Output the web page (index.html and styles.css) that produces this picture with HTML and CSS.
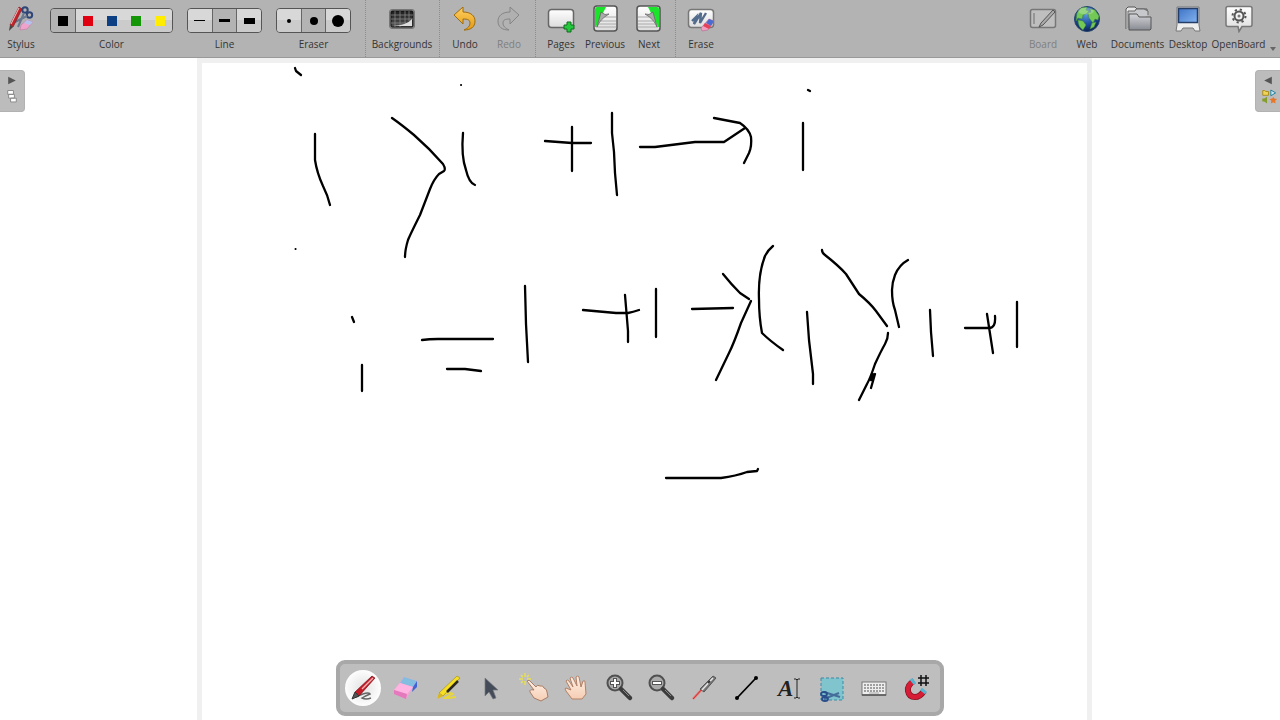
FILE: index.html
```html
<!DOCTYPE html>
<html lang="en">
<head>
<meta charset="utf-8">
<title>OpenBoard</title>
<link rel="stylesheet" href="styles.css">
</head>
<body>
<svg class="defs" aria-hidden="true">
  <defs>
    <linearGradient id="paper" x1="0" y1="0" x2="0" y2="1"><stop offset="0" stop-color="#fff"/><stop offset="1" stop-color="#dcdcdc"/></linearGradient>
    <linearGradient id="gold" x1="0" y1="0" x2="0" y2="1"><stop offset="0" stop-color="#ffd062"/><stop offset="1" stop-color="#e39a12"/></linearGradient>
    <linearGradient id="folder" x1="0" y1="0" x2="0" y2="1"><stop offset="0" stop-color="#d4d5d9"/><stop offset="1" stop-color="#888b92"/></linearGradient>
    <linearGradient id="screen" x1="0" y1="0" x2="1" y2="1"><stop offset="0" stop-color="#3f74c6"/><stop offset="1" stop-color="#82b2ef"/></linearGradient>
    <radialGradient id="ocean" cx=".45" cy=".3" r=".7"><stop offset="0" stop-color="#5c9ae0"/><stop offset=".6" stop-color="#1d4d9c"/><stop offset="1" stop-color="#0b2250"/></radialGradient>
    <linearGradient id="skin" x1="0" y1="0" x2="0" y2="1"><stop offset="0" stop-color="#fff0e4"/><stop offset="1" stop-color="#f5cdb4"/></linearGradient>
    <linearGradient id="chalk" x1="0" y1="0" x2="0" y2="1"><stop offset="0" stop-color="#1c1c1c"/><stop offset="1" stop-color="#555"/></linearGradient>
  </defs>
</svg>

<header class="toolbar">
  <button class="tool tool-side" type="button">
    <svg class="icon" viewBox="0 0 28 28"><g fill="none" stroke="#2f4678" stroke-width="2"><circle cx="18" cy="5" r="2.7"/><circle cx="22.5" cy="10" r="2.7"/></g><path d="M17 8l-6 14M20 11L8 17" stroke="#6a7890" stroke-width="2"/><path d="M12 2l3 2L6 22l-3-2z" fill="#c4232a" stroke="#801c20" stroke-width=".7"/><path d="M12 3L4 19" stroke="#eecaca" stroke-width="1"/><path d="M3 20l3 2-4 4z" fill="#444"/><path d="M14 20l6-5 6 2-6 7-7 1z" fill="#efa2cb" stroke="#c07aa3" stroke-width=".6"/><path d="M20 15l6 2-3 3-6-2z" fill="#b3c3ed"/></svg>
    <span>Stylus</span>
  </button>

  <div class="choice choice-color" role="group" aria-labelledby="lbl-color">
    <div class="segments">
      <button class="segment on" type="button" aria-label="Black" aria-pressed="true"><i class="swatch black"></i></button>
      <button class="segment" type="button" aria-label="Red"><i class="swatch red"></i></button>
      <button class="segment" type="button" aria-label="Blue"><i class="swatch blue"></i></button>
      <button class="segment" type="button" aria-label="Green"><i class="swatch green"></i></button>
      <button class="segment" type="button" aria-label="Yellow"><i class="swatch yellow"></i></button>
    </div>
    <span id="lbl-color">Color</span>
  </div>
  <div class="choice" role="group" aria-labelledby="lbl-line">
    <div class="segments divided">
      <button class="segment" type="button" aria-label="Thin line"><i class="stroke thin"></i></button>
      <button class="segment on" type="button" aria-label="Medium line" aria-pressed="true"><i class="stroke medium"></i></button>
      <button class="segment" type="button" aria-label="Thick line"><i class="stroke thick"></i></button>
    </div>
    <span id="lbl-line">Line</span>
  </div>
  <div class="choice" role="group" aria-labelledby="lbl-eraser">
    <div class="segments divided">
      <button class="segment" type="button" aria-label="Small eraser"><i class="dot small"></i></button>
      <button class="segment on" type="button" aria-label="Medium eraser" aria-pressed="true"><i class="dot mid"></i></button>
      <button class="segment" type="button" aria-label="Large eraser"><i class="dot large"></i></button>
    </div>
    <span id="lbl-eraser">Eraser</span>
  </div>

  <div class="section">
    <button class="tool tool-wide" type="button">
      <svg class="icon" viewBox="0 0 28 28"><rect x="1.500" y="4.500" width="25" height="19" rx="2.500" fill="#999" stroke="#777"/><rect x="3" y="6" width="22" height="16" rx="1" fill="url(#chalk)" stroke="#111"/><path d="M3 10h22M3 14h22M3 18h15M7 6v16M12 6v16M17 6v12M21 6v10" stroke="#858585" stroke-width=".8"/><path d="M5 21q14-1 19-7v7z" fill="#ddd"/></svg>
      <span>Backgrounds</span>
    </button>
  </div>
  <div class="section">
    <button class="tool" type="button">
      <svg class="icon" viewBox="0 0 28 28"><path d="M3 10l9-8v5c8 0 12 4 12 9 0 6-4 9-11 9 4-2 6-4 6-7s-2-4-7-4v5z" fill="url(#gold)" stroke="#9c6c13"/></svg>
      <span>Undo</span>
    </button>
    <button class="tool" type="button" disabled>
      <svg class="icon" viewBox="0 0 28 28"><path d="M24 10l-9-8v5C7 7 3 11 3 16c0 6 4 9 11 9-4-2-6-4-6-7s2-4 7-4v5z" fill="#b0b0b0" stroke="#858585"/></svg>
      <span>Redo</span>
    </button>
  </div>
  <div class="section">
    <button class="tool" type="button">
      <svg class="icon" viewBox="0 0 28 28"><rect x="1.500" y="4.500" width="25" height="18" rx="3" fill="url(#paper)" stroke="#666" stroke-width="1.500"/><path d="M20 17h4v3h3v4h-3v3h-4v-3h-3v-4h3z" fill="#24c83c" stroke="#126a1c"/></svg>
      <span>Pages</span>
    </button>
    <button class="tool" type="button">
      <svg class="icon" viewBox="0 0 28 28"><rect x="3" y="1" width="23" height="25" rx="3" fill="url(#paper)" stroke="#555" stroke-width="1.500"/><path d="M12 12h13M10 16h15M8 19h17M5 22h20" stroke="#aaa"/><path d="M4 4q0-2 2-2h9L5 22H4z" fill="#1be52a"/><path d="M10 7q4 4 8 2Q9 14 6 22z" fill="#aaa" stroke="#666" stroke-width=".8"/></svg>
      <span>Previous</span>
    </button>
    <button class="tool" type="button">
      <svg class="icon" viewBox="0 0 28 28"><rect x="2" y="1" width="23" height="25" rx="3" fill="url(#paper)" stroke="#555" stroke-width="1.500"/><path d="M3 12h13M3 16h15M3 19h17M3 22h20" stroke="#aaa"/><path d="M24 4q0-2-2-2h-9l10 20h1z" fill="#1be52a"/><path d="M18 7q-4 4-8 2 9 5 12 13z" fill="#aaa" stroke="#666" stroke-width=".8"/></svg>
      <span>Next</span>
    </button>
  </div>
  <div class="section">
    <button class="tool" type="button">
      <svg class="icon" viewBox="0 0 28 28"><rect x="1.500" y="4.500" width="25" height="18" rx="3" fill="url(#paper)" stroke="#777" stroke-width="1.500"/><path d="M5 16l4-4-2 7 7-11-1 10 6-10" fill="none" stroke="#536b8d" stroke-width="2.400"/><path d="M14 23l8-9 5 2-6 9-6 1z" fill="#f1a0c3" stroke="#b16a90" stroke-width=".6"/><path d="M22 14l5 2-3 5-5-3z" fill="#4a6cd0"/><path d="M18 18l6 3-2 3-6-3z" fill="#e6415b"/></svg>
      <span>Erase</span>
    </button>
  </div>

  <nav class="modes">
    <button class="tool" type="button" disabled>
      <svg class="icon" viewBox="0 0 28 28"><rect x="1.500" y="4.500" width="25" height="18" rx="2" fill="#bfbfbf" stroke="#777" stroke-width="1.500"/><path d="M5 8v11" stroke="#888" stroke-width="1.500"/><path d="M24 5l2 2-12 13-4 2 2-4z" fill="#aaa" stroke="#555"/></svg>
      <span>Board</span>
    </button>
    <button class="tool" type="button">
      <svg class="icon" viewBox="0 0 28 28"><circle cx="14" cy="14" r="12.500" fill="url(#ocean)" stroke="#24446f"/><path d="M4 8l4-5 6-1-1 3 3 1-3 3-3 1-1 4-4-1-2 3zM5 15l5 1 3 4-3 5q-5-3-5-10zM17 4l5 1 4 6-1 4-3-1-2 4-4-5-1-5 3-1zM19 18l4-1-2 5-4 2z" fill="#74c956" stroke="#418734" stroke-width=".5"/><ellipse cx="13" cy="6" rx="8" ry="3.500" fill="#fff" opacity=".25"/></svg>
      <span>Web</span>
    </button>
    <button class="tool tool-mid" type="button">
      <svg class="icon" viewBox="0 0 28 28"><path d="M2 24V4l2-2h7l2 2h10v4" fill="#e7e7e7" stroke="#555"/><path d="M4 23V6h7l1-2h8l4 2v4" fill="#c7c8cb" stroke="#666"/><path d="M5 25V9h8l2 3h12v12l-1 1z" fill="url(#folder)" stroke="#555"/></svg>
      <span>Documents</span>
    </button>
    <button class="tool" type="button">
      <svg class="icon" viewBox="0 0 28 28"><path d="M3 2h22v18l1 6h-5l-2-3H9l-2 3H2l1-6z" fill="#eee" stroke="#777"/><rect x="4.500" y="3.500" width="19" height="14" fill="url(#screen)" stroke="#243e67" stroke-width="1.500"/></svg>
      <span>Desktop</span>
    </button>
    <button class="tool tool-mid" type="button">
      <svg class="icon" viewBox="0 0 28 28"><path d="M3 1.500h22q2 0 2 2v16q0 2-2 2h-8l-3 5-1-5H3q-2 0-2-2v-16q0-2 2-2z" fill="url(#paper)" stroke="#777" stroke-width="1.500"/><g fill="none" stroke="#555"><circle cx="14" cy="11" r="4.500" stroke-width="2"/><circle cx="14" cy="11" r="6.500" stroke-width="2" stroke-dasharray="2.200 2.900"/></g><circle cx="14" cy="11" r="1.500" fill="#777"/></svg>
      <span>OpenBoard</span>
    </button>
    <button class="more" type="button" aria-label="More"></button>
  </nav>
</header>

<main class="workspace">
  <section class="page" aria-label="Board page">
    <svg class="ink" viewBox="202 63 885 657">
      <path d="M295 68l1 3 5 4"/>
      <path d="M461 85h.1M295.500 249h.1" class="point"/>
      <path d="M808 90l2 1"/>
      <path d="M315 134v26q2 13 8 26 5 10 7 19"/>
      <path d="M392 118q10 7 22 17 15 13 29 29 3 5 1 7l-5 3q-5 5-9 15l-10 26q-10 20-12 25-3 10-3 17"/>
      <path d="M463 133q-2 23 3 37 3 13 9 15"/>
      <path d="M545 141l27 2h19M572 127v44"/>
      <path d="M612 113v20l2 19 1 21 2 22"/>
      <path d="M640 147h15l40-5h29l21-14"/>
      <path d="M714 118l26 5q9 6 11 14 1 9-2 16l-5 10"/>
      <path d="M803 123v47"/>
      <path d="M352 317l2 5M362 365v26"/>
      <path d="M422 340q7-1 16-1h55M447 369h18l16 2"/>
      <path d="M525 286l1 38 2 38"/>
      <path d="M583 310l33 3h12q5-1 11-3M625 295l3 36v11M656 289v48"/>
      <path d="M692 309l41-1M723 274q8 10 17 19l9 6M751 301q-5 11-10 22-7 20-12 30l-13 27"/>
      <path d="M773 246q-5 4-8 10-7 18-6 43 0 18 3 34 8 8 21 17"/>
      <path d="M807 312l2 28 4 34v10"/>
      <path d="M822 250q0 3 3 5 14 11 21 19l13 20q11 9 17 17l11 15M888 333q0 6-3 11-4 7-10 20-5 15-8 20l-8 16M871 388l4-14-4 6 2-6"/>
      <path d="M908 260q-9 5-13 15-3 8-3 15 0 12 3 20l4 17"/>
      <path d="M930 310l1 22 2 24M965 328h24q7 0 6-12M987 314l4 26 2 13M1017 302v45"/>
      <path d="M666 478h55q15-2 26-6l10-1 1-2"/>
    </svg>
  </section>

  <button class="drawer drawer-left" type="button" aria-label="Show pages">
    <svg viewBox="0 0 24 42"><path d="M8 6v8l8-4z" fill="#555"/><g fill="#fff" stroke="#888"><path d="M7.500 20.500h6v4h-6zM8.500 24.500h6v4h-6zM10.500 28.500h6v4h-6z"/></g></svg>
  </button>
  <button class="drawer drawer-right" type="button" aria-label="Show library">
    <svg viewBox="0 0 24 42"><path d="M16 6v8l-8-4z" fill="#555"/><path d="M6.500 20.500h2l1 1h3v4h-6z" fill="#efd455" stroke="#aa8a1b"/><path d="M15 20l5 3-5 3z" fill="#cce7f1" stroke="#187c9d"/><path d="M6 29h2l3-2v7l-3-2H6z" fill="#849e2c"/><path d="M17.500 27l1 2 3 .3-2 2 .5 2.700-2.500-1.300L15 34l.5-2.700-2-2 3-.3z" fill="#e87628"/></svg>
  </button>
</main>

<div class="palette" role="toolbar" aria-label="Drawing tools">
  <button class="pick on" type="button" aria-label="Pen"><svg viewBox="0 0 32 32"><path d="M9 25q12-6 14-3-5 2-8 4 4 2 9 0" fill="none" stroke="#666" stroke-width="1.500"/><path d="M25 4l3 2L12 24l-4-4z" fill="#c41b29" stroke="#721019" stroke-width=".7"/><path d="M26 6L15 17" stroke="#f7b4b4" stroke-width="1.500"/><path d="M8 20l4 4-7 3z" fill="#555" stroke="#333"/></svg></button>
  <button class="pick" type="button" aria-label="Eraser"><svg viewBox="0 0 32 32"><path d="M14 5l13 4-11 18-12-5V18z" fill="#f3a4d5"/><path d="M14 5l13 4-4 6-13-4z" fill="#83bde0"/><path d="M10 11l13 4-6 7-13-4z" fill="#ffb4e1"/><path d="M27 9v6l-5 5 1-5z" fill="#4164d4"/><path d="M4 18l13 4-1 5-12-5z" fill="#e479bd"/></svg></button>
  <button class="pick" type="button" aria-label="Highlighter"><svg viewBox="0 0 32 32"><path d="M5 26q13-7 16-4-5 2-8 4 5 0 11-1" fill="none" stroke="#e9d638" stroke-width="1.800"/><path d="M25 4l3 2-17 18-4-3z" fill="#f7df24" stroke="#a6921a" stroke-width=".7"/><path d="M26 9L15 20" stroke="#292720" stroke-width="2.500"/><path d="M7 21l4 3-6 3z" fill="#d9b51e"/></svg></button>
  <button class="pick" type="button" aria-label="Select"><svg viewBox="0 0 32 32"><path d="M10 6v18l4-4 4 7 3-1-3-8h5z" fill="#444b59" stroke="#777b83" stroke-width=".7"/></svg></button>
  <button class="pick" type="button" aria-label="Interact"><svg viewBox="0 0 32 32"><path d="M7 1v4M7 9v4M1 7h4M9 7h4M3 3l2 2M9 9l2 2M11 3L9 5M5 9l-2 2" stroke="#e9e052" stroke-width="1.500"/><path d="M9 9q2-2 4 1l5 5q1-3 4-1 3-1 4 2 3 1 3 4l1 5-7 4-7-3-4-6q-1-3 4-2z" fill="url(#skin)" stroke="#a77c66"/></svg></button>
  <button class="pick" type="button" aria-label="Hand"><svg viewBox="0 0 32 32"><path d="M12 27l-6-8q-2-3 0-3l5 2L6 9q1-2 3 0l4 6-3-9q2-2 3 0l4 8-1-9q2-2 3 0l2 10 2-6q2-1 2 1l1 12-4 5z" fill="url(#skin)" stroke="#b38168"/></svg></button>
  <button class="pick" type="button" aria-label="Zoom in"><svg viewBox="0 0 32 32"><circle cx="12" cy="11" r="7.500" fill="#aaa" stroke="#505050" stroke-width="2"/><path d="M12 6v10M7 11h10" stroke="#555" stroke-width="4"/><path d="M12 7v8M8 11h8" stroke="#fff" stroke-width="2"/><path d="M18 17l9 9" stroke="#3c3c3c" stroke-width="4.500" stroke-linecap="round"/><path d="M20 18l6 6" stroke="#888"/></svg></button>
  <button class="pick" type="button" aria-label="Zoom out"><svg viewBox="0 0 32 32"><circle cx="12" cy="11" r="7.500" fill="#aaa" stroke="#505050" stroke-width="2"/><path d="M7 11h10" stroke="#555" stroke-width="4"/><path d="M8 11h8" stroke="#fff" stroke-width="2"/><path d="M18 17l9 9" stroke="#3c3c3c" stroke-width="4.500" stroke-linecap="round"/><path d="M20 18l6 6" stroke="#888"/></svg></button>
  <button class="pick" type="button" aria-label="Laser pointer"><svg viewBox="0 0 32 32"><path d="M5 27l10-11" stroke="#e57a75" stroke-width="2.500"/><path d="M5 27l10-11" stroke="#d52a2a"/><path d="M25 4l3 2-12 14-4-3z" fill="#777" stroke="#555"/><path d="M25 6L14 18" stroke="#e5e5e5" stroke-width="1.500"/><path d="M20 11l2-2" stroke="#333" stroke-width="2"/></svg></button>
  <button class="pick" type="button" aria-label="Line"><svg viewBox="0 0 32 32"><path d="M7 26L26 6" stroke="#000" stroke-width="1.800"/><circle cx="7" cy="26" r="2"/><circle cx="26" cy="6" r="2"/></svg></button>
  <button class="pick" type="button" aria-label="Text"><svg viewBox="0 0 32 32"><text class="letter" x="5" y="24">A</text><path d="M21 7h2l1 1 1-1h2M21 26h2l1-1 1 1h2M24 8v17" fill="none" stroke="#222"/></svg></button>
  <button class="pick" type="button" aria-label="Capture"><svg viewBox="0 0 32 32"><path d="M5 6h22v22H5z" fill="#80c5cd" stroke="#3d89a6" stroke-dasharray="3 2"/><path d="M8 20l16 5M8 27l15-6" stroke="#456d9b" stroke-width="2"/><g fill="none" stroke="#294e8b" stroke-width="1.800"><ellipse cx="8" cy="22" rx="3" ry="2"/><ellipse cx="9" cy="27" rx="3" ry="2"/></g></svg></button>
  <button class="pick" type="button" aria-label="Keyboard"><svg viewBox="0 0 32 32"><rect x="4" y="10" width="24" height="13" fill="#eee" stroke="#777"/><path d="M6 13h20M6 16h20M6 19h20" stroke="#858585" stroke-width="1.500" stroke-dasharray="2 1"/><path d="M11 21h10" stroke="#aaa"/><path d="M4 23h24" stroke="#555" stroke-width="1.500"/></svg></button>
  <button class="pick" type="button" aria-label="Snap to grid"><svg viewBox="0 0 32 32"><path d="M13 9q-7 4-6 10 1 6 7 6 5 0 9-6" fill="none" stroke="#891321" stroke-width="6"/><path d="M13 9q-7 4-6 10 1 6 7 6 5 0 9-6" fill="none" stroke="#d71d36" stroke-width="4.500"/><path d="M10 7l4 5M20 17l5 4" stroke="#57b4d2" stroke-width="3"/><path d="M20 3v11M25 3v11M17 6h11M17 11h11" stroke="#111" stroke-width="1.500"/></svg></button>
</div>
</body>
</html>
```

FILE: styles.css
```css
* {
  box-sizing: border-box;
}

body {
  margin: 0;
  min-height: 100vh;
  display: flex;
  flex-direction: column;
  background: #fff;
  color: #333;
  font: 10px/14px "Open Sans", "Noto Sans", sans-serif;
}

button {
  margin: 0;
  padding: 0;
  border: 0;
  background: none;
  color: inherit;
  font: inherit;
}

.defs {
  position: absolute;
  width: 0;
  height: 0;
}

.toolbar {
  display: flex;
  min-height: 58px;
  background: #b3b3b3;
  border-bottom: 1px solid #999;
}

.tool {
  display: flex;
  flex-direction: column;
  align-items: center;
  gap: 4px;
  width: 44px;
  padding-top: 5px;
  white-space: nowrap;
}

.tool:disabled {
  color: #808080;
}

.tool-side {
  width: 42px;
  margin-right: 8px;
}

.tool-mid {
  width: 57px;
}

.tool-wide {
  width: 66px;
}

.icon {
  display: block;
  width: 28px;
  height: 28px;
}

.choice {
  display: flex;
  flex-direction: column;
  align-items: center;
  gap: 4px;
  width: 75px;
  margin-right: 14px;
  padding-top: 8px;
}

.choice-color {
  width: 123px;
}

.segments {
  display: flex;
  width: 100%;
  height: 25px;
  overflow: hidden;
  border: 1px solid #555;
  border-radius: 4px;
}

.segment {
  display: flex;
  flex: 1;
  align-items: center;
  justify-content: center;
  background: linear-gradient(#d8d8d8 50%, #cbcbcb 50%);
}

.segment.on {
  background: #b3b3b3;
}

.choice-color .on,
.divided .segment:not(:last-child) {
  border-right: 1px solid #666;
}

.swatch {
  width: 10px;
  height: 10px;
}

.black { background: #000; }
.red { background: #e1000f; }
.blue { background: #0d3f85; }
.green { background: #149608; }
.yellow { background: #ffec00; }

.stroke {
  width: 11px;
  background: #000;
}

.thin { height: 1px; }
.medium { height: 3px; }
.thick { height: 6px; }

.dot {
  border-radius: 50%;
  background: #000;
}

.small { width: 4px; height: 4px; }
.mid { width: 8px; height: 8px; }
.large { width: 12px; height: 12px; }

.section {
  display: flex;
  padding: 0 4px 0 3px;
  border-left: 1px dotted #8d8d8d;
}

.modes {
  display: flex;
  margin-left: auto;
}

.more {
  align-self: flex-end;
  width: 6px;
  height: 4px;
  margin: 0 4px 6px 3px;
  background: #666;
  clip-path: polygon(0 0, 100% 0, 50% 100%);
}

.workspace {
  position: relative;
  display: grid;
  flex: 1;
  grid-template-columns: 197fr 895fr 188fr;
}

.page {
  grid-column: 2;
  border: 5px solid #f0f0f0;
  border-bottom: 0;
}

.ink {
  display: block;
  width: 100%;
  fill: none;
  stroke: #000;
  stroke-width: 2.3;
  stroke-linecap: round;
  stroke-linejoin: round;
}

.point {
  stroke-width: 2;
}

.drawer {
  position: absolute;
  top: 12px;
  width: 25px;
  height: 42px;
  background: #bcbcbc;
  border: 1px solid #b2b2b2;
}

.drawer svg {
  display: block;
  width: 24px;
  height: 40px;
}

.drawer-left {
  left: 0;
  border-left: 0;
  border-radius: 0 4px 4px 0;
}

.drawer-right {
  right: 0;
  border-right: 0;
  border-radius: 4px 0 0 4px;
}

.palette {
  position: fixed;
  bottom: 4px;
  left: 50%;
  display: flex;
  width: 608px;
  max-width: 100%;
  padding: 5px 2px;
  transform: translateX(-50%);
  background: #bebebe;
  border: 4px solid #a8a8a8;
  border-radius: 9px;
}

.pick {
  display: flex;
  flex: 1;
  align-items: center;
  justify-content: center;
  height: 38px;
}

.pick svg {
  display: block;
  width: 32px;
  height: 32px;
}

.pick.on svg {
  width: 36px;
  height: 36px;
  padding: 2px;
  border-radius: 50%;
  background: radial-gradient(#e2e2e2, #fff 75%);
}

.letter {
  font: italic bold 23px "Liberation Serif", serif;
  fill: #222;
}
```
